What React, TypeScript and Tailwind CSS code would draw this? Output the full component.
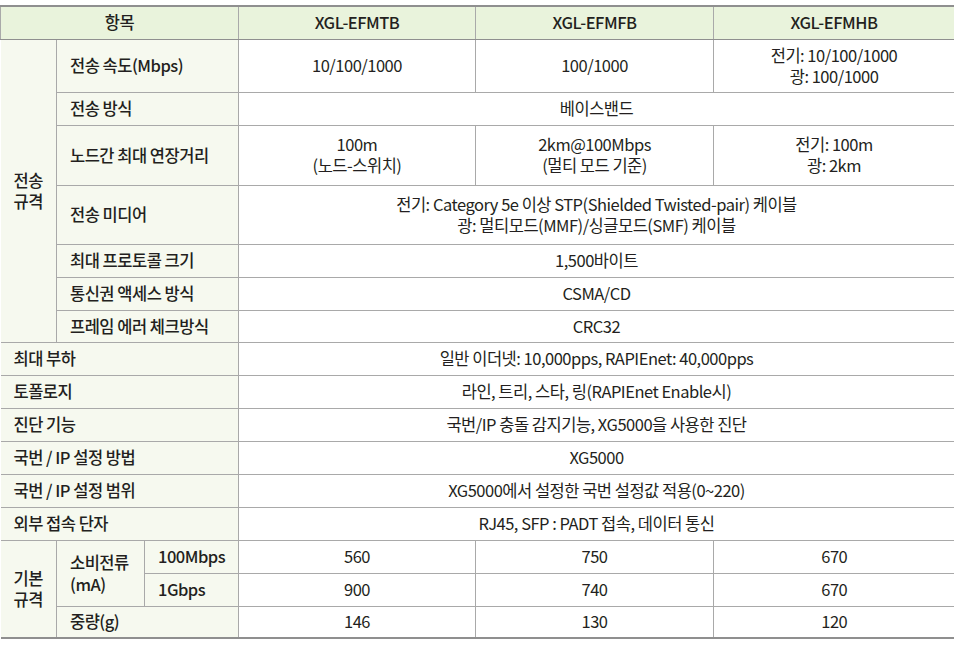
import type { ReactNode } from "react";

const font = { fontFamily: '"Noto Sans CJK KR", "Noto Sans", sans-serif' };

const B = "border border-[#a9a9a9]";
const label = `${B} bg-[#f6f9ef] text-left pl-[13px] font-medium`;
const cell = `${B} bg-white text-center`;

type Row = { name: string; h: number; vals: ReactNode[] };

const Two = ({ a, b }: { a: string; b: string }) => (
  <div className="leading-[21px]">
    <div>{a}</div>
    <div>{b}</div>
  </div>
);

const transmission: Row[] = [
  { name: "전송 속도(Mbps)", h: 53, vals: ["10/100/1000", "100/1000", <Two key="a" a="전기: 10/100/1000" b="광: 100/1000" />] },
  { name: "전송 방식", h: 33, vals: ["베이스밴드"] },
  { name: "노드간 최대 연장거리", h: 60, vals: [<Two key="a" a="100m" b="(노드-스위치)" />, <Two key="b" a="2km@100Mbps" b="(멀티 모드 기준)" />, <Two key="c" a="전기: 100m" b="광: 2km" />] },
  { name: "전송 미디어", h: 59, vals: [<Two key="a" a="전기: Category 5e 이상 STP(Shielded Twisted-pair) 케이블" b="광: 멀티모드(MMF)/싱글모드(SMF) 케이블" />] },
  { name: "최대 프로토콜 크기", h: 33, vals: ["1,500바이트"] },
  { name: "통신권 액세스 방식", h: 33, vals: ["CSMA/CD"] },
  { name: "프레임 에러 체크방식", h: 32, vals: ["CRC32"] },
];

const general: Row[] = [
  { name: "최대 부하", h: 33, vals: ["일반 이더넷: 10,000pps, RAPIEnet: 40,000pps"] },
  { name: "토폴로지", h: 33, vals: ["라인, 트리, 스타, 링(RAPIEnet Enable시)"] },
  { name: "진단 기능", h: 33, vals: ["국번/IP 충돌 감지기능, XG5000을 사용한 진단"] },
  { name: "국번 / IP 설정 방법", h: 33, vals: ["XG5000"] },
  { name: "국번 / IP 설정 범위", h: 33, vals: ["XG5000에서 설정한 국번 설정값 적용(0~220)"] },
  { name: "외부 접속 단자", h: 33, vals: ["RJ45, SFP : PADT 접속, 데이터 통신"] },
];

const Vals = ({ vals }: { vals: ReactNode[] }) =>
  vals.length === 1 ? (
    <td colSpan={3} className={cell}>
      {vals[0]}
    </td>
  ) : (
    <>
      {vals.map((v, i) => (
        <td key={i} className={cell}>
          {v}
        </td>
      ))}
    </>
  );

export default function App() {
  return (
    <div className="w-[954px] h-[646px] bg-white pt-[5px]" style={font}>
      <table className="w-[954px] table-fixed border-collapse text-[16.5px] text-[#231f20] tracking-[-0.03em] border-t-[2px] border-b-[2px] border-t-[#8f8f8f] border-b-[#8f8f8f]">
        <colgroup>
          <col className="w-[56px]" />
          <col className="w-[88px]" />
          <col className="w-[94px]" />
          <col className="w-[237px]" />
          <col className="w-[238px]" />
          <col className="w-[241px]" />
        </colgroup>
        <thead>
          <tr className="h-[33px] bg-[#e9f3dc]">
            <th colSpan={3} className={`${B} border-t-[#8f8f8f] border-b-[#8f8f8f] font-medium`}>항목</th>
            <th className={`${B} border-t-[#8f8f8f] border-b-[#8f8f8f] font-medium`}>XGL-EFMTB</th>
            <th className={`${B} border-t-[#8f8f8f] border-b-[#8f8f8f] font-medium`}>XGL-EFMFB</th>
            <th className={`${B} border-t-[#8f8f8f] border-b-[#8f8f8f] font-medium`}>XGL-EFMHB</th>
          </tr>
        </thead>
        <tbody>
          {transmission.map((r, i) => (
            <tr key={r.name} style={{ height: r.h }}>
              {i === 0 && (
                <td rowSpan={transmission.length} className={`${B} bg-[#f6f9ef] text-center font-medium leading-[21px] border-l-0`}>
                  전송
                  <br />
                  규격
                </td>
              )}
              <td colSpan={2} className={label}>
                {r.name}
              </td>
              <Vals vals={r.vals} />
            </tr>
          ))}
          {general.map((r) => (
            <tr key={r.name} style={{ height: r.h }}>
              <td colSpan={3} className={`${label} border-l-0`}>
                {r.name}
              </td>
              <Vals vals={r.vals} />
            </tr>
          ))}
          <tr className="h-[33px]">
            <td rowSpan={3} className={`${B} bg-[#f6f9ef] text-center font-medium leading-[21px] border-l-0`}>
              기본
              <br />
              규격
            </td>
            <td rowSpan={2} className={`${B} bg-[#f6f9ef] text-left pl-[13px] font-medium leading-[22px]`}>
              소비전류
              <br />
              (mA)
            </td>
            <td className={label}>100Mbps</td>
            <td className={cell}>560</td>
            <td className={cell}>750</td>
            <td className={`${cell} border-r-0`}>670</td>
          </tr>
          <tr className="h-[33px]">
            <td className={label}>1Gbps</td>
            <td className={cell}>900</td>
            <td className={cell}>740</td>
            <td className={`${cell} border-r-0`}>670</td>
          </tr>
          <tr className="h-[32px]">
            <td colSpan={2} className={label}>
              중량(g)
            </td>
            <td className={cell}>146</td>
            <td className={cell}>130</td>
            <td className={`${cell} border-r-0`}>120</td>
          </tr>
        </tbody>
      </table>
    </div>
  );
}
